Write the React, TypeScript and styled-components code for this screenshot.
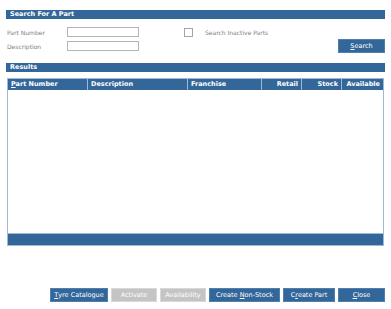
import styled, { createGlobalStyle } from "styled-components";

const GlobalStyle = createGlobalStyle`
  html, body {
    margin: 0;
    padding: 0;
    background: #ffffff;
  }
  body {
    font-family: "DejaVu Sans", "Liberation Sans", sans-serif;
  }
`;

const Page = styled.div`
  width: 391px;
  height: 309px;
  box-sizing: border-box;
  padding: 10px 6px 0 6px;
  display: flex;
  flex-direction: column;
`;

const SectionBar = styled.div`
  height: 9px;
  background: #336699;
  color: #ffffff;
  font-size: 6.5px;
  font-weight: 700;
  line-height: 9px;
  padding-left: 4px;
`;

const SearchArea = styled.div`
  display: grid;
  grid-template-columns: 61px 72px 50px 1fr 47px;
  grid-template-rows: 10px 10px;
  row-gap: 4px;
  align-items: center;
  margin-top: 8px;
  height: 30px;
`;

const Label = styled.span`
  font-size: 6px;
  color: #808080;
  padding-left: 1px;
`;

const TextBox = styled.div`
  height: 10px;
  box-sizing: border-box;
  border: 1px solid #b4b4b4;
  background: #ffffff;
`;

const CheckCell = styled.div`
  display: flex;
  align-items: center;
  grid-column: 4 / 5;
  margin-left: -5px;
  gap: 11px;
`;

const CheckBox = styled.div`
  width: 7px;
  height: 7px;
  border: 1px solid #a5a5a5;
  background: #ffffff;
`;

const SearchButtonCell = styled.div`
  grid-column: 5 / 6;
  grid-row: 2 / 3;
  align-self: start;
  margin-top: -2px;
`;

const Button = styled.div<{ $disabled?: boolean; $width: number }>`
  width: ${(p) => p.$width}px;
  height: 14px;
  box-sizing: border-box;
  display: flex;
  align-items: center;
  justify-content: center;
  font-size: 6.5px;
  color: #ffffff;
  background: ${(p) => (p.$disabled ? "#c4c4c4" : "#336699")};
  border: 1px solid ${(p) => (p.$disabled ? "#d8d8d8" : "#4f7fae")};
  u {
    text-decoration: underline;
  }
`;

const ResultsBar = styled(SectionBar)`
  margin-top: 6px;
`;

const Table = styled.div`
  margin: 6px 1px 0 1px;
  height: 168px;
  display: flex;
  flex-direction: column;
  border: 1px solid #9fb8d4;
  box-sizing: border-box;
`;

const HeaderRow = styled.div`
  display: grid;
  grid-template-columns: 80px 100px 74px 40px 40px 1fr;
  height: 11px;
  background: #336699;
`;

const HeaderCell = styled.div<{ $right?: boolean; $last?: boolean }>`
  font-size: 6.5px;
  font-weight: 700;
  color: #ffffff;
  line-height: 11px;
  padding: 0 3px;
  text-align: ${(p) => (p.$right ? "right" : "left")};
  border-right: ${(p) => (p.$last ? "none" : "1px solid #9fb8d4")};
  white-space: nowrap;
  overflow: hidden;
`;

const TableBody = styled.div`
  flex: 1;
  background: #ffffff;
`;

const TableFooter = styled.div`
  height: 11px;
  background: #336699;
  border-top: 1px solid #9fb8d4;
`;

const ButtonRow = styled.div`
  display: flex;
  justify-content: flex-end;
  gap: 3px;
  margin-top: 42px;
`;

const columns = [
  { key: "part", label: <><u>P</u>art Number</>, right: false },
  { key: "desc", label: "Description", right: false },
  { key: "fran", label: "Franchise", right: false },
  { key: "retail", label: "Retail", right: true },
  { key: "stock", label: "Stock", right: true },
  { key: "avail", label: "Available", right: true },
];

export default function App() {
  return (
    <>
      <GlobalStyle />
      <Page>
        <SectionBar>Search For A Part</SectionBar>
        <SearchArea>
          <Label>Part Number</Label>
          <TextBox />
          <span />
          <CheckCell>
            <CheckBox />
            <Label>Search Inactive Parts</Label>
          </CheckCell>
          <span />
          <Label>Description</Label>
          <TextBox />
          <SearchButtonCell>
            <Button $width={47}>
              <u>S</u>earch
            </Button>
          </SearchButtonCell>
        </SearchArea>
        <ResultsBar>Results</ResultsBar>
        <Table>
          <HeaderRow>
            {columns.map((c, i) => (
              <HeaderCell key={c.key} $right={c.right} $last={i === columns.length - 1}>
                {c.label}
              </HeaderCell>
            ))}
          </HeaderRow>
          <TableBody />
          <TableFooter />
        </Table>
        <ButtonRow>
          <Button $width={58}>
            <u>T</u>yre Catalogue
          </Button>
          <Button $width={46} $disabled>
            Activate
          </Button>
          <Button $width={46} $disabled>
            Availability
          </Button>
          <Button $width={71}>
            Create&nbsp;<u>N</u>on-Stock
          </Button>
          <Button $width={52}>
            C<u>r</u>eate Part
          </Button>
          <Button $width={47}>
            <u>C</u>lose
          </Button>
        </ButtonRow>
      </Page>
    </>
  );
}
